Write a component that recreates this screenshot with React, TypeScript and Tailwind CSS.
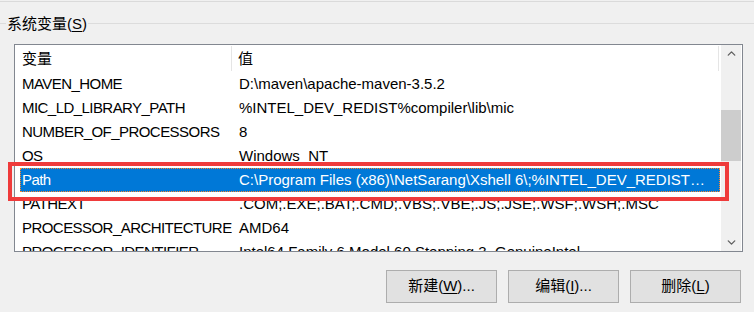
import { ChevronUp, ChevronDown } from "lucide-react";

// ─── Data ─────────────────────────────────────────────────────────────────────
const VARS = [
  { name: "MAVEN_HOME", value: "D:\\maven\\apache-maven-3.5.2" },
  { name: "MIC_LD_LIBRARY_PATH", value: "%INTEL_DEV_REDIST%compiler\\lib\\mic" },
  { name: "NUMBER_OF_PROCESSORS", value: "8" },
  { name: "OS", value: "Windows_NT" },
  {
    name: "Path",
    value:
      "C:\\Program Files (x86)\\NetSarang\\Xshell 6\\;%INTEL_DEV_REDIST%redist\\intel64_win\\mpirt;C:\\Windows\\system32",
    selected: true,
  },
  { name: "PATHEXT", value: ".COM;.EXE;.BAT;.CMD;.VBS;.VBE;.JS;.JSE;.WSF;.WSH;.MSC" },
  { name: "PROCESSOR_ARCHITECTURE", value: "AMD64" },
  { name: "PROCESSOR_IDENTIFIER", value: "Intel64 Family 6 Model 60 Stepping 3, GenuineIntel" },
];

const FONT = "font-['Liberation_Sans','Noto_Sans_CJK_SC',sans-serif]";

function WinButton({ label, hotkey, suffix }: { label: string; hotkey: string; suffix: string }) {
  return (
    <button className="w-[111px] h-[33px] bg-[#e1e1e1] border border-[#adadad] text-[15px] text-black flex items-center justify-center">
      {label}(<span className="underline underline-offset-2">{hotkey}</span>){suffix}
    </button>
  );
}

export default function App() {
  return (
    <div className={`relative w-[754px] h-[312px] overflow-hidden bg-[#f0f0f0] ${FONT}`}>
      {/* top separator */}
      <div className="mt-px h-px bg-[#dadada]" />

      {/* group box caption */}
      <div className="mt-[9px] flex items-center h-[24px]">
        <div className="w-[6px] h-px bg-[#dcdcdc]" />
        <span className="px-px text-[15px] text-black leading-none">
          系统变量(<span className="underline underline-offset-2">S</span>)
        </span>
        <div className="flex-1 h-px bg-[#dcdcdc]" />
      </div>

      {/* list view */}
      <div className="ml-[14px] mt-[9px] w-[729px] h-[208px] border border-[#828790] bg-white flex">
        <div className="flex-1 overflow-hidden flex flex-col">
          {/* header */}
          <div className="h-[27px] shrink-0 flex text-[15px] text-black">
            <div className="w-[217px] pl-[7px] pt-[2px] flex items-center border-r border-[#e5e5e5] my-px">变量</div>
            <div className="w-[487px] pl-[6px] pt-[2px] flex items-center border-r border-[#e5e5e5] my-px">值</div>
          </div>
          {/* rows */}
          {VARS.map((v) => (
            <div
              key={v.name}
              className={`ml-[5px] w-[700px] h-[24px] shrink-0 flex items-center text-[15px] ${
                v.selected
                  ? "bg-[#0078d7] text-white border border-dotted border-[#ff8728]"
                  : "text-black border border-transparent"
              }`}
            >
              <div className="w-[211px] pl-px whitespace-nowrap overflow-hidden tracking-[-0.55px]">{v.name}</div>
              <div className="flex-1 pl-[7px] pr-[6px] truncate">{v.value}</div>
            </div>
          ))}
        </div>

        {/* scrollbar */}
        <div className="w-[20px] bg-[#f0f0f0] flex flex-col">
          <div className="h-[17px] flex items-center justify-center text-[#606060]">
            <ChevronUp size={13} strokeWidth={2.5} />
          </div>
          <div className="flex-1 pt-[48px]">
            <div className="h-[51px] bg-[#cdcdcd]" />
          </div>
          <div className="h-[17px] flex items-center justify-center text-[#606060]">
            <ChevronDown size={13} strokeWidth={2.5} />
          </div>
        </div>
        <div className="w-px bg-white" />
      </div>

      {/* buttons */}
      <div className="mt-[18px] pr-[13px] flex justify-end gap-[11px]">
        <WinButton label="新建" hotkey="W" suffix="..." />
        <WinButton label="编辑" hotkey="I" suffix="..." />
        <WinButton label="删除" hotkey="L" suffix="" />
      </div>

      {/* red annotation box */}
      <div className="absolute left-[8px] top-[162px] w-[721px] h-[39px] border-4 border-[#ef3b3b] pointer-events-none" />
    </div>
  );
}
